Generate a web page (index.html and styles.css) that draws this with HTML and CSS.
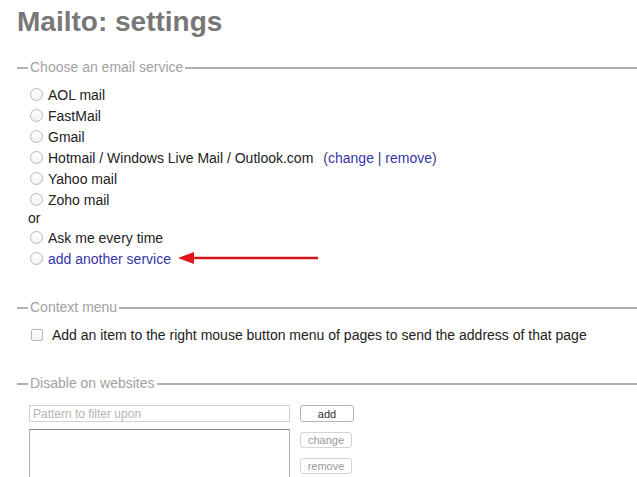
FILE: index.html
```html
<!DOCTYPE html>
<html>

<head>
    <meta charset="UTF-8">
    <title>Mailto: settings</title>
    <link rel="stylesheet" href="styles.css">
</head>

<body>
    <h1 class='title'>Mailto: settings</h1>

    <fieldset class='group services'>
        <legend>Choose an email service</legend>
        <label class='row'><input type='radio' name='service'> AOL mail</label>
        <label class='row'><input type='radio' name='service'> FastMail</label>
        <label class='row'><input type='radio' name='service'> Gmail</label>
        <label class='row'><input type='radio' name='service'> Hotmail / Windows Live Mail / Outlook.com
            <span class='edit'>(<a href='#'>change</a> | <a href='#'>remove</a>)</span></label>
        <label class='row'><input type='radio' name='service'> Yahoo mail</label>
        <label class='row'><input type='radio' name='service'> Zoho mail</label>
        <div class='or'>or</div>
        <label class='row'><input type='radio' name='service'> Ask me every time</label>
        <label class='row'><input type='radio' name='service'> <a href='#'>add another service</a></label>
    </fieldset>

    <fieldset class='group context'>
        <legend>Context menu</legend>
        <label class='row check'><input type='checkbox'> Add an item to the right mouse button menu of pages to send the address of that page</label>
    </fieldset>

    <fieldset class='group disable'>
        <legend>Disable on websites</legend>
        <div class='filters'>
            <div class='fields'>
                <input class='pattern' type='text' placeholder='Pattern to filter upon'>
                <textarea class='list'></textarea>
            </div>
            <div class='buttons'>
                <button class='btn add'>add</button>
                <button class='btn' disabled>change</button>
                <button class='btn' disabled>remove</button>
            </div>
        </div>
    </fieldset>

    <svg class='arrow' width='142' height='14' viewBox='0 0 142 14'>
        <line x1='14' y1='7' x2='140' y2='7' stroke='#d4121b' stroke-width='2.6' />
        <polygon points='0,7 16,1 16,13' fill='#e0141d' />
    </svg>
</body>

</html>
```

FILE: styles.css
```css
html,
body {
    margin: 0;
    padding: 0;
}

body {
    position: relative;
    padding-left: 17px;
    font-family: "Liberation Sans", Arial, sans-serif;
    font-size: 14px;
    color: #222;
    background: #fff;
    overflow: hidden;
    height: 477px;
    box-sizing: border-box;
}

.title {
    margin: 5px 0 21px;
    font-size: 28px;
    line-height: 34px;
    font-weight: bold;
    color: #777;
}

.group {
    margin: 0 0 31px;
    padding: 9px 0 0 11px;
    border: none;
    border-top: 2px solid #b0b0b0;
    min-width: 0;
}

.group legend {
    padding: 0 2px;
    font-size: 14px;
    line-height: 15px;
    color: #a2a2a2;
}

.row {
    display: flex;
    align-items: center;
    height: 21px;
    white-space: nowrap;
}

.row input[type='radio'] {
    appearance: none;
    width: 13px;
    height: 13px;
    margin: 0 5px 0 2px;
    border: 1px solid #b8b8b8;
    border-radius: 50%;
    background: linear-gradient(#fff, #f2f2f2);
    box-sizing: border-box;
}

.row input[type='checkbox'] {
    appearance: none;
    width: 12px;
    height: 12px;
    margin: 0 9px 0 3px;
    border: 1px solid #b8b8b8;
    border-radius: 2px;
    background: linear-gradient(#fff, #f2f2f2);
    box-sizing: border-box;
}

a {
    color: #3535a8;
    text-decoration: none;
}

.edit {
    margin-left: 10px;
    color: #3a3a8e;
}

.or {
    height: 17px;
    line-height: 17px;
}

.context {
    padding-top: 9px;
}

.disable {
    margin-bottom: 0;
    padding-top: 14px;
}

.filters {
    display: flex;
    gap: 10px;
    margin-left: 1px;
}

.fields {
    display: flex;
    flex-direction: column;
    gap: 7px;
    width: 261px;
}

.pattern {
    box-sizing: border-box;
    width: 261px;
    height: 17px;
    margin: 0;
    padding: 0 3px;
    border: 1px solid #cfcfcf;
    font-family: "Liberation Sans", Arial, sans-serif;
    font-size: 12px;
    outline: none;
}

.pattern::placeholder {
    color: #b4b4b4;
}

.list {
    box-sizing: border-box;
    width: 261px;
    height: 48px;
    margin: 0;
    border: 1px solid #b0b0b0;
    border-top-color: #8a8a8a;
    border-bottom: none;
    resize: none;
}

.buttons {
    display: flex;
    flex-direction: column;
    align-items: flex-start;
    gap: 10px;
}

.btn {
    box-sizing: border-box;
    width: 52px;
    height: 16px;
    padding: 0;
    border: 1px solid #d4d4d4;
    border-radius: 3px;
    background: #fff;
    font-family: "Liberation Sans", Arial, sans-serif;
    font-size: 11px;
    line-height: 14px;
    color: #9a9a9a;
}

.btn.add {
    width: 54px;
    height: 17px;
    border-color: #b4b4b4;
    color: #333;
}

.arrow {
    position: absolute;
    left: 178px;
    top: 251px;
}
```
